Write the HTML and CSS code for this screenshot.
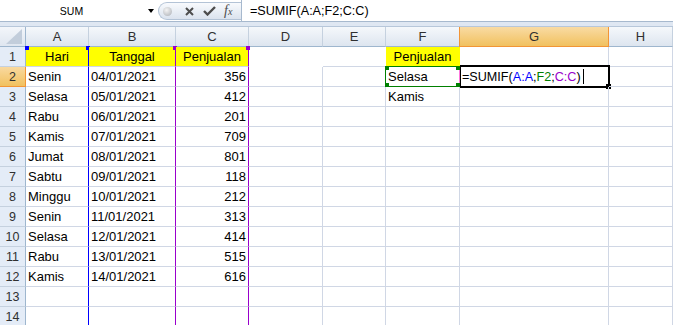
FILE: index.html
```html
<!DOCTYPE html>
<html lang="id">
<head>
    <meta charset="UTF-8">
    <meta name="viewport" content="width=device-width, initial-scale=1.0">
    <title>SUMIF - Penjualan</title>
    <link rel="stylesheet" href="styles.css">
</head>
<body>
    <!-- formula bar -->
    <div class="formula-bar">
        <div class="name-box">SUM</div>
        <div class="name-drop"><span class="arrow"></span></div>
        <div class="fx-group">
            <span class="dot"></span>
            <svg class="ico-x" width="9" height="9" viewBox="0 0 9 9"><path d="M1 1L8 8M8 1L1 8" stroke="#4d4d4d" stroke-width="2"/></svg>
            <svg class="ico-ok" width="13" height="10" viewBox="0 0 13 10"><path d="M1 5L4.5 8.5L12 1" stroke="#4d4d4d" stroke-width="2.4" fill="none"/></svg>
            <span class="fx">f<small>x</small></span>
        </div>
        <div class="formula-input">=SUMIF(A:A;F2;C:C)</div>
    </div>
    <div class="bar-gap"></div>

    <!-- sheet -->
    <div class="sheet">
        <div class="corner"><svg width="25" height="19" viewBox="0 0 25 19"><polygon points="6,17 22,17 22,2" fill="#c2cddb"/></svg></div>
        <div class="ch">A</div><div class="ch">B</div><div class="ch">C</div><div class="ch">D</div><div class="ch">E</div><div class="ch">F</div><div class="ch ch-sel">G</div><div class="ch">H</div>

        <div class="rh">1</div>
        <div class="c ra hd">Hari<i class="mk mk-l blue"></i><i class="mk mk-r blue"></i></div>
        <div class="c rc hd">Tanggal<i class="mk mk-r purple"></i></div>
        <div class="c rc hd">Penjualan<i class="mk mk-r purple"></i></div>
        <div class="c no-r no-b"></div>
        <div class="c no-r"></div>
        <div class="c hd hd-f">Penjualan</div>
        <div class="c"></div><div class="c"></div>

        <div class="rh rh-sel">2</div>
        <div class="c ra">Senin</div><div class="c rc">04/01/2021</div><div class="c rc num">356</div><div class="c"></div><div class="c"></div>
        <div class="c">Selasa<span class="crit-box"><i class="hd-sq tl"></i><i class="hd-sq tr"></i><i class="hd-sq bl"></i><i class="hd-sq br"></i></span></div>
        <div class="c formula">=SUMIF(<span class="blue-t">A:A</span>;<span class="green-t">F2</span>;<span class="purple-t">C:C</span>)<span class="caret"></span><span class="active-box"></span><span class="fill-handle"></span></div>
        <div class="c"></div>

        <div class="rh">3</div>
        <div class="c ra">Selasa</div><div class="c rc">05/01/2021</div><div class="c rc num">412</div><div class="c"></div><div class="c"></div><div class="c">Kamis</div><div class="c"></div><div class="c"></div>

        <div class="rh">4</div>
        <div class="c ra">Rabu</div><div class="c rc">06/01/2021</div><div class="c rc num">201</div><div class="c"></div><div class="c"></div><div class="c"></div><div class="c"></div><div class="c"></div>

        <div class="rh">5</div>
        <div class="c ra">Kamis</div><div class="c rc">07/01/2021</div><div class="c rc num">709</div><div class="c"></div><div class="c"></div><div class="c"></div><div class="c"></div><div class="c"></div>

        <div class="rh">6</div>
        <div class="c ra">Jumat</div><div class="c rc">08/01/2021</div><div class="c rc num">801</div><div class="c"></div><div class="c"></div><div class="c"></div><div class="c"></div><div class="c"></div>

        <div class="rh">7</div>
        <div class="c ra">Sabtu</div><div class="c rc">09/01/2021</div><div class="c rc num">118</div><div class="c"></div><div class="c"></div><div class="c"></div><div class="c"></div><div class="c"></div>

        <div class="rh">8</div>
        <div class="c ra">Minggu</div><div class="c rc">10/01/2021</div><div class="c rc num">212</div><div class="c"></div><div class="c"></div><div class="c"></div><div class="c"></div><div class="c"></div>

        <div class="rh">9</div>
        <div class="c ra">Senin</div><div class="c rc">11/01/2021</div><div class="c rc num">313</div><div class="c"></div><div class="c"></div><div class="c"></div><div class="c"></div><div class="c"></div>

        <div class="rh">10</div>
        <div class="c ra">Selasa</div><div class="c rc">12/01/2021</div><div class="c rc num">414</div><div class="c"></div><div class="c"></div><div class="c"></div><div class="c"></div><div class="c"></div>

        <div class="rh">11</div>
        <div class="c ra">Rabu</div><div class="c rc">13/01/2021</div><div class="c rc num">515</div><div class="c"></div><div class="c"></div><div class="c"></div><div class="c"></div><div class="c"></div>

        <div class="rh">12</div>
        <div class="c ra">Kamis</div><div class="c rc">14/01/2021</div><div class="c rc num">616</div><div class="c"></div><div class="c"></div><div class="c"></div><div class="c"></div><div class="c"></div>

        <div class="rh">13</div>
        <div class="c ra"></div><div class="c rc"></div><div class="c rc"></div><div class="c"></div><div class="c"></div><div class="c"></div><div class="c"></div><div class="c"></div>

        <div class="rh">14</div>
        <div class="c ra"></div><div class="c rc"></div><div class="c rc"></div><div class="c"></div><div class="c"></div><div class="c"></div><div class="c"></div><div class="c"></div>
    </div>
</body>
</html>
```

FILE: styles.css
```css
body {
    margin: 0;
    overflow: hidden;
    background-color: #fff;
    font-family: "Liberation Sans", Arial, sans-serif;
    color: #000;
}

/* formula bar */
.formula-bar {
    display: flex;
    height: 21px;
    border-bottom: 1px solid #a7b9ce;
}
.name-box {
    width: 143px;
    text-align: center;
    font-size: 10.5px;
    line-height: 22px;
}
.name-drop {
    width: 15px;
    display: flex;
    align-items: center;
    justify-content: center;
}
.arrow {
    width: 0;
    height: 0;
    border-left: 3.5px solid transparent;
    border-right: 3.5px solid transparent;
    border-top: 4px solid #000;
    margin-top: 1px;
}
.fx-group {
    width: 83px;
    height: 18px;
    margin-top: 2px;
    box-sizing: border-box;
    border: 1px solid #b3c3d6;
    border-right: none;
    border-radius: 9px 0 0 9px;
    background: linear-gradient(#f8fafd, #dbe3ee);
    display: flex;
    align-items: center;
}
.dot {
    width: 9px;
    height: 9px;
    margin-left: 4px;
    border-radius: 50%;
    background: radial-gradient(circle at 40% 35%, #f4f4f4, #a9adb3);
}
.ico-x {
    margin-left: 13px;
}
.ico-ok {
    margin-left: 9px;
}
.fx {
    margin-left: 8px;
    font-family: "Liberation Serif", "Times New Roman", serif;
    font-style: italic;
    font-size: 14px;
    color: #4d4d4d;
}
.fx small {
    font-size: 10px;
}
.formula-input {
    flex: 1;
    border-left: 1px solid #a7b9ce;
    padding-left: 8px;
    font-size: 12.6px;
    line-height: 23px;
}
.bar-gap {
    height: 4px;
    background-color: #dfe7f2;
    border-bottom: 1px solid #b7c7da;
}

/* sheet grid */
.sheet {
    display: grid;
    grid-template-columns: 26px 63px 87px 73px 74px 63px 74px 149px 64px;
    grid-auto-rows: 20px;
}
.c {
    position: relative;
    box-sizing: border-box;
    border-right: 1px solid #d0d7e5;
    border-bottom: 1px solid #d0d7e5;
    padding: 0 2px;
    font-size: 13px;
    line-height: 20px;
    white-space: nowrap;
}
.num {
    text-align: right;
}
.hd {
    background-color: #ffff00;
    text-align: center;
}
.hd-f {
    border-right-color: #ffff00;
}
.no-r {
    border-right-color: transparent;
}
.no-b {
    border-bottom-color: transparent;
}

/* headers */
.corner, .ch, .rh {
    box-sizing: border-box;
    border-right: 1px solid #c5d1df;
    border-bottom: 1px solid #9eb6ce;
    color: #303030;
    text-align: center;
}
.corner {
    background: linear-gradient(#f3f6fa, #dfe6f0);
    border-right-color: #9eb6ce;
}
.corner svg {
    display: block;
}
.ch {
    background: linear-gradient(#f5f8fb, #dde5ef);
    font-size: 13px;
    line-height: 20px;
}
.ch-sel {
    background: linear-gradient(#f9dba3, #f1c15f);
    border-left: 1px solid #f29536;
    border-right-color: #f29536;
    border-bottom-color: #f29536;
    margin-left: -1px;
}
.rh {
    background-color: #e4ecf7;
    border-right-color: #9eb6ce;
    border-bottom-color: #c5d1df;
    font-size: 12.5px;
    line-height: 21px;
}
.rh-sel {
    background: linear-gradient(#f9d99f, #f1c15f);
    border-right-color: #f29536;
    border-bottom-color: #f29536;
}

/* range references of the formula */
.ra {
    border-right-color: #0000ff;
}
.rc {
    border-right-color: #9900cc;
}
.mk {
    position: absolute;
    top: -1px;
    width: 4px;
    height: 4px;
}
.mk-l {
    left: -1px;
}
.mk-r {
    right: -2px;
}
.blue {
    background-color: #0000ff;
}
.purple {
    background-color: #9900cc;
}
.blue-t {
    color: #0000ff;
}
.green-t {
    color: #008000;
}
.purple-t {
    color: #9900cc;
}

.crit-box {
    position: absolute;
    top: -1px;
    left: -1px;
    right: -1px;
    bottom: -1px;
    border: 1px solid #008000;
    border-right-color: #ff77dd;
}
.hd-sq {
    position: absolute;
    width: 4px;
    height: 4px;
    background-color: #008000;
}
.tl { top: -1px; left: -1px; }
.tr { top: -1px; right: -1px; }
.bl { bottom: -1px; left: -1px; }
.br { bottom: -1px; right: -1px; }

/* active cell */
.formula {
    font-size: 12.6px;
}
.caret {
    display: inline-block;
    width: 1px;
    height: 15px;
    margin-left: 2px;
    background-color: #000;
    vertical-align: -3px;
}
.active-box {
    position: absolute;
    top: -2px;
    left: 0;
    right: -2px;
    bottom: -2px;
    border: 2px solid #000;
    border-left-width: 1px;
}
.fill-handle {
    position: absolute;
    right: -3px;
    bottom: -3px;
    width: 5px;
    height: 5px;
    background-color: #000;
}
```
